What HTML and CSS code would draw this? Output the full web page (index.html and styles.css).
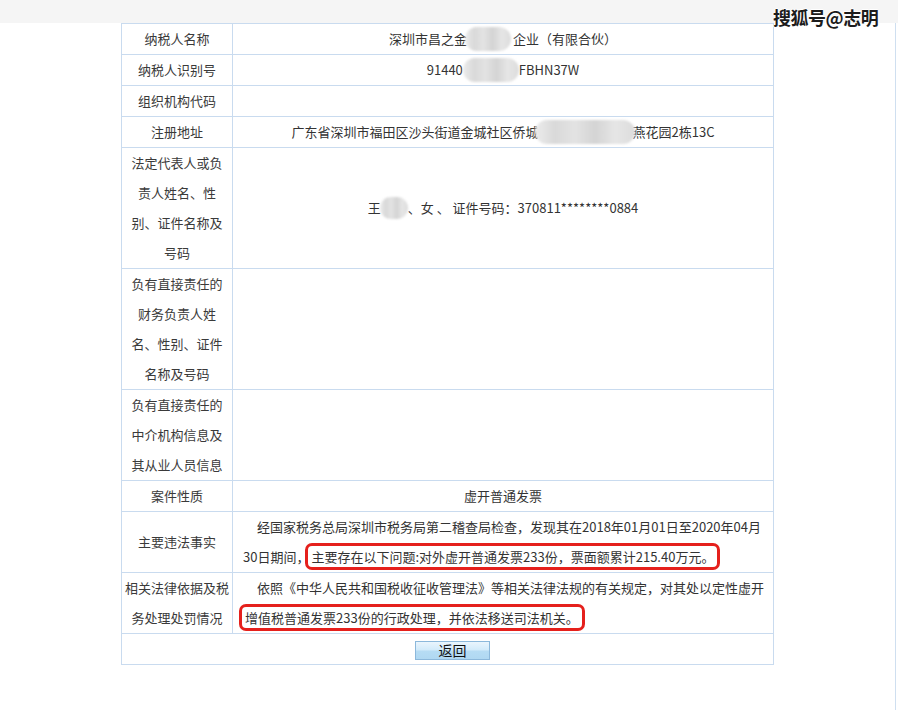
FILE: index.html
```html
<!DOCTYPE html>
<html lang="zh-CN">
<head>
<meta charset="utf-8">
<title>案件信息</title>
<link rel="stylesheet" href="styles.css">
</head>
<body>
<div class="topbar"></div>
<div class="watermark">搜狐号@志明</div>
<div class="page">
  <table class="info">
    <colgroup><col class="c1"><col class="c2"></colgroup>
    <tr><th>纳税人名称</th><td class="center">深圳市昌之金<span class="blur b1"></span>企业（有限合伙）</td></tr>
    <tr><th>纳税人识别号</th><td class="center">91440<span class="blur b2"></span>FBHN37W</td></tr>
    <tr><th>组织机构代码</th><td class="center">&nbsp;</td></tr>
    <tr><th>注册地址</th><td class="center">广东省深圳市福田区沙头街道金城社区侨城<span class="blur b3"></span>燕花园2栋13C</td></tr>
    <tr><th>法定代表人或负<br>责人姓名、性<br>别、证件名称及<br>号码</th><td class="center">王<span class="blur b4"></span>、女 、 证件号码：370811********0884</td></tr>
    <tr><th>负有直接责任的<br>财务负责人姓<br>名、性别、证件<br>名称及号码</th><td>&nbsp;</td></tr>
    <tr><th>负有直接责任的<br>中介机构信息及<br>其从业人员信息</th><td>&nbsp;</td></tr>
    <tr><th>案件性质</th><td class="center">虚开普通发票</td></tr>
    <tr><th>主要违法事实</th><td class="para"><div class="indent">经国家税务总局深圳市税务局第二稽查局检查，发现其在2018年01月01日至2020年04月</div><div>30日期间，<span class="mark">主要存在以下问题:对外虚开普通发票233份，票面额累计215.40万元。</span></div></td></tr>
    <tr><th>相关法律依据及税<br>务处理处罚情况</th><td class="para"><div class="indent">依照《中华人民共和国税收征收管理法》等相关法律法规的有关规定，对其处以定性虚开</div><div><span class="mark">增值税普通发票233份的行政处理，并依法移送司法机关。</span></div></td></tr>
    <tr><td colspan="2" class="btnrow"><button class="back" type="button">返回</button></td></tr>
  </table>
</div>
</body>
</html>
```
FILE: styles.css
```css
html, body {
  margin: 0;
  padding: 0;
  background: #fff;
}
body {
  width: 898px;
  height: 710px;
  overflow: hidden;
  position: relative;
  font-family: "Noto Sans CJK SC", "Microsoft YaHei", sans-serif;
  font-size: 13px;
  color: #333;
}
.topbar {
  height: 23px;
  background: #f5f5f5;
}
.watermark {
  position: absolute;
  left: 773px;
  top: 5px;
  font-size: 18px;
  font-weight: bold;
  line-height: 24px;
  color: #1c1c1c;
  letter-spacing: -0.5px;
  text-shadow: 1px 0 0 #fff, -1px 0 0 #fff, 0 1px 0 #fff, 0 -1px 0 #fff;
}
.page {
  width: 896px;
  height: 687px;
  border-right: 1px solid #cfdff0;
  box-sizing: border-box;
  padding-left: 121px;
}
.info {
  border-collapse: collapse;
  table-layout: fixed;
  width: 653px;
}
.info col.c1 { width: 111px; }
.info th,
.info td {
  border: 1px solid #c9dbef;
  padding: 0;
  line-height: 30px;
  font-weight: normal;
  vertical-align: middle;
  white-space: nowrap;
}
.info th {
  text-align: center;
  color: #3a3a3a;
}
.info td.center {
  text-align: center;
}
.info td.para {
  text-align: left;
  padding: 0 2px 0 10px;
}
.indent {
  text-indent: 14px;
}
.blur {
  display: inline-block;
  vertical-align: middle;
  height: 24px;
  border-radius: 12px;
  background: linear-gradient(90deg, #ececec 0%, #d9d9d9 20%, #e3e3e3 40%, #d4d4d4 60%, #e6e6e6 80%, #dcdcdc 100%);
  filter: blur(1px);
  margin-top: -3px;
}
.b1 { width: 46px; margin-left: -2px; margin-right: 2px; }
.b2 { width: 56px; margin-left: 0; }
.b3 { width: 100px; margin-left: -4px; margin-right: -2px; }
.b4 { width: 28px; height: 22px; margin-left: -1px; }
.mark {
  outline: 3px solid #e5201c;
  outline-offset: 1px;
  border-radius: 3px;
  padding: 0 2px;
}
.btnrow {
  text-align: center;
  padding-left: 10px !important;
}
.back {
  width: 75px;
  height: 19px;
  padding: 0;
  margin: 0;
  border: 1px solid #8cb8db;
  background: linear-gradient(#eaf5fd 0%, #d3ebfa 45%, #b6dcf4 55%, #b0d8f2 100%);
  font-family: "Noto Sans CJK SC", sans-serif;
  font-size: 14px;
  line-height: 17px;
  color: #111;
  vertical-align: middle;
}
```
